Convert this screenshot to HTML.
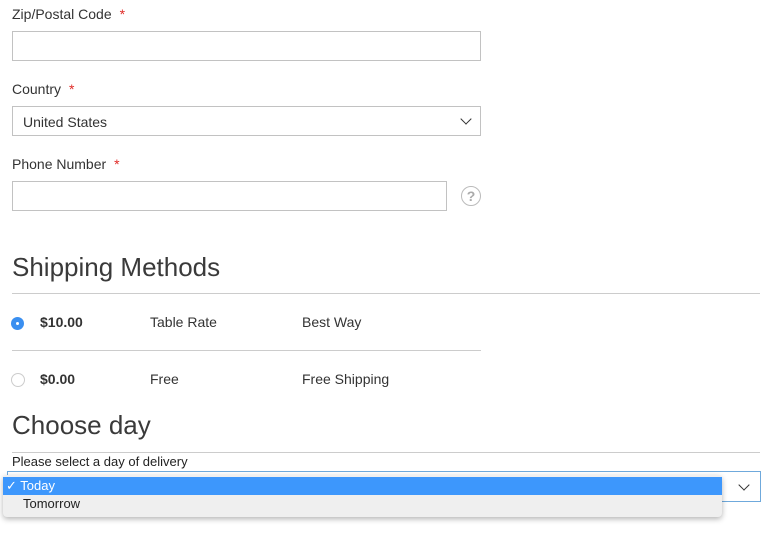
<!DOCTYPE html>
<html><head><meta charset="utf-8"><style>
body{margin:0;width:768px;height:539px;background:#fff;position:relative;overflow:hidden;font-family:"Liberation Sans",sans-serif;color:#333;}
.a{position:absolute;white-space:nowrap;}
.lbl{font-size:14px;}
.req{color:#e02b27;margin-left:8px;}
.box{position:absolute;border:1px solid #c2c2c2;background:#fff;box-sizing:border-box;}
.h{font-size:26px;font-weight:300;color:#3a3a3a;}
.hr{position:absolute;height:1px;background:#ccc;}
.t{font-size:14px;}
.chev{position:absolute;width:7px;height:7px;border-right:1.5px solid #333;border-bottom:1.5px solid #333;transform:rotate(45deg);}
</style></head><body>
<div class="a lbl" style="left:12px;top:6px">Zip/Postal Code<span class="req">*</span></div>
<div class="box" style="left:12px;top:31px;width:469px;height:30px"></div>
<div class="a lbl" style="left:12px;top:81px">Country<span class="req">*</span></div>
<div class="box" style="left:12px;top:106px;width:469px;height:30px"></div>
<div class="a t" style="left:23px;top:114px">United States</div>
<div class="chev" style="left:462px;top:115px"></div>
<div class="a lbl" style="left:12px;top:156px">Phone Number<span class="req">*</span></div>
<div class="box" style="left:12px;top:181px;width:435px;height:30px"></div>
<div class="a" style="left:461px;top:186px;width:18px;height:18px;border:1.5px solid #bbb;border-radius:50%;color:#aaa;font-size:14px;font-weight:bold;text-align:center;line-height:18px">?</div>
<div class="a h" style="left:12px;top:252px">Shipping Methods</div>
<div class="hr" style="left:12px;top:293px;width:748px"></div>
<div class="a" style="left:11px;top:317px;width:13px;height:13px;border-radius:50%;background:#3a8ff0;"><div style="position:absolute;left:5px;top:5px;width:3px;height:3px;background:#fff;border-radius:50%"></div></div>
<div class="a t" style="left:40px;top:314px;font-weight:bold">$10.00</div>
<div class="a t" style="left:150px;top:314px">Table Rate</div>
<div class="a t" style="left:302px;top:314px">Best Way</div>
<div class="hr" style="left:12px;top:350px;width:469px"></div>
<div class="a" style="left:11px;top:373px;width:12px;height:12px;border-radius:50%;border:1px solid #ccc;"></div>
<div class="a t" style="left:40px;top:371px;font-weight:bold">$0.00</div>
<div class="a t" style="left:150px;top:371px">Free</div>
<div class="a t" style="left:302px;top:371px">Free Shipping</div>
<div class="a h" style="left:12px;top:410px">Choose day</div>
<div class="hr" style="left:12px;top:452px;width:748px"></div>
<div class="a" style="left:12px;top:454px;font-size:13px;color:#222">Please select a day of delivery</div>
<div class="box" style="left:7px;top:471px;width:754px;height:31px;border:1px solid #6fa9dc"></div>
<div class="chev" style="left:740px;top:481px"></div>
<div class="a" style="left:3px;top:475px;width:719px;height:42px;background:#efefef;border-radius:4px;box-shadow:0 2px 6px rgba(0,0,0,.3)"></div>
<div class="a" style="left:3px;top:477px;width:719px;height:18px;background:#3d97fc"></div>
<div class="a" style="left:6px;top:478px;font-size:13px;color:#fff">✓ Today</div>
<div class="a" style="left:23px;top:496px;font-size:13px;color:#222">Tomorrow</div>
</body></html>
